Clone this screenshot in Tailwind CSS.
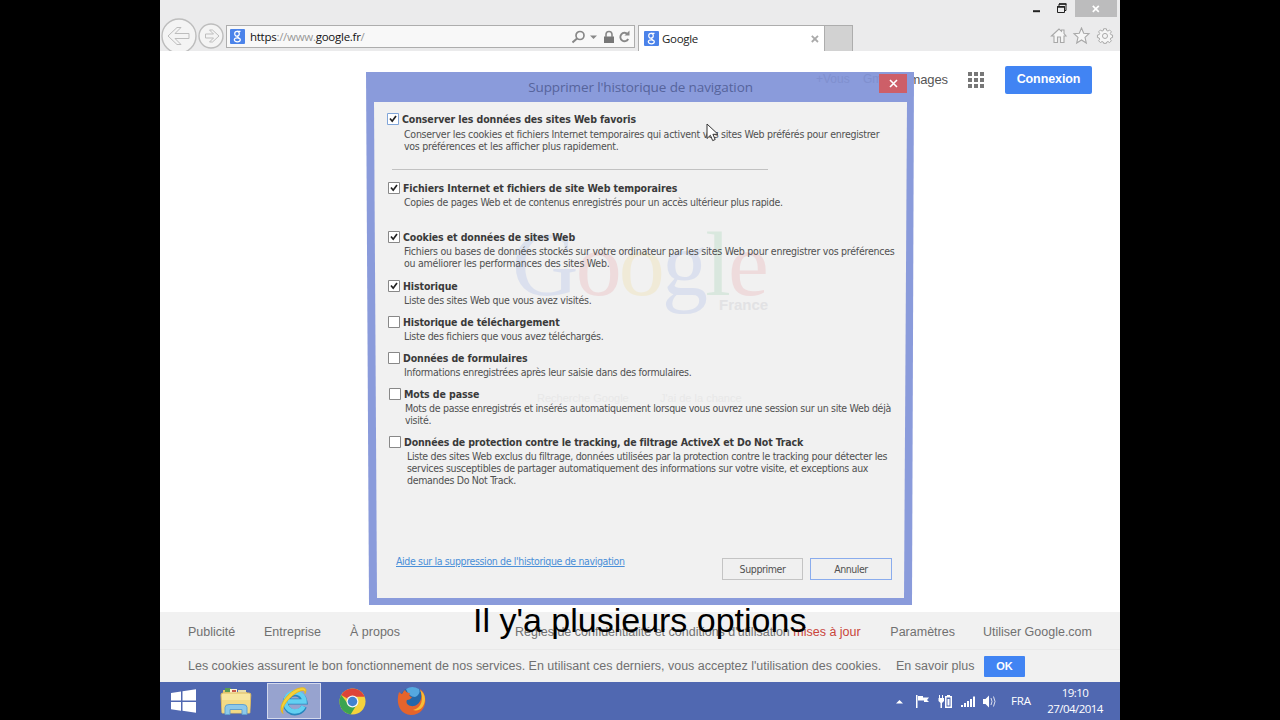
<!DOCTYPE html>
<html lang="fr">
<head>
    <meta charset="UTF-8">
    <meta name="viewport" content="width=device-width, initial-scale=1.0">
    <script src="https://cdn.jsdelivr.net/npm/@tailwindcss/browser@4"></script>
    <title>Supprimer l'historique de navigation</title>
</head>
<body class="bg-black overflow-hidden">
<div class="relative mx-auto flex h-[720px] w-[960px] flex-col overflow-hidden bg-white font-['Liberation_Sans',sans-serif]">

    <!-- browser chrome -->
    <header class="flex h-[51px] shrink-0 flex-col bg-[#ebebec]">
        <div class="flex h-[25px] items-start justify-end pr-[3px]">
            <svg class="mt-[2px] mr-[4px]" width="40" height="14" viewBox="0 0 40 14" fill="none" stroke="#222">
                <path d="M2 9.200h7" stroke-width="2"/>
                <path d="M26.500 4.500h7v6h-7zM28 4v-2h7v6.500h-2" stroke-width="1"/>
                <path d="M26 5h8M28 2h7.500" stroke-width="1.500"/>
            </svg>
            <div class="flex h-[17px] w-[42px] items-center justify-center bg-[#bcbcbd]">
                <svg width="8" height="8" viewBox="0 0 8 8" stroke="#fff" stroke-width="1.700"><path d="M.8.8l6 6M6.800.8l-6 6"/></svg>
            </div>
        </div>
        <div class="flex h-[26px] items-start">
            <svg class="-mt-[7px] h-[33px] w-[66px] shrink-0" viewBox="0 0 66 33" fill="#f4f4f4" stroke="#bdbdbd">
                <circle cx="19" cy="18" r="17" stroke-width="1.400"/>
                <path d="M8 18l9-8.500h4l-6 6h14v5H15l6 6h-4z"/>
                <circle cx="51" cy="18" r="12" stroke-width="1.400"/>
                <path d="M59 18l-6.500-6h-3l4 4h-8v4h8l-4 4h3z"/>
            </svg>
            <div class="flex h-[23px] w-[409px] shrink-0 items-center border border-[#adadad] bg-[#f8f8f8] pl-[3px] text-[11.500px] font-['Open_Sans',sans-serif]">
                <svg width="15" height="15" viewBox="0 0 15 15"><rect width="15" height="15" rx="1" fill="#4b83ea"/><g fill="none" stroke="#fff" stroke-width="1.200"><ellipse cx="7" cy="4.800" rx="2.300" ry="2.400"/><path d="M7 2.300h3.500M8 7.200c-1 1 .3 1.400 1.200 2.400"/><ellipse cx="7.300" cy="10.800" rx="3" ry="2"/></g></svg>
                <span class="mt-px ml-[5px] text-[#999] tracking-[-0.27px]"><span class="text-[#111]">https</span>://www.<span class="text-[#111]">google.fr</span>/</span>
                <svg class="mr-[2px] ml-auto" width="60" height="16" viewBox="0 0 60 16" fill="none" stroke="#888">
                    <circle cx="8" cy="6.500" r="4" stroke-width="1.700"/>
                    <path d="M5 9.500L.5 13.500" stroke-width="2"/>
                    <path d="M18 6.500h7l-3.500 3.500z" fill="#888" stroke="none"/>
                    <path d="M32 7.500h10v6.500H32z" fill="#777" stroke="none"/>
                    <path d="M34 8V5.500a3 3 0 0 1 6 0V8" stroke-width="1.600"/>
                    <path d="M55.500 5A4.200 4.200 0 1 0 56.200 10" stroke-width="1.900"/>
                    <path d="M52.500 6.500h5v-5z" fill="#888" stroke="none"/>
                </svg>
            </div>
            <div class="ml-[3px] flex h-[26px] w-[187px] shrink-0 items-center border border-b-0 border-[#adadad] bg-white pl-[5px] text-[11.500px] font-['Open_Sans',sans-serif] text-[#222]">
                <svg width="15" height="15" viewBox="0 0 15 15"><rect width="15" height="15" rx="1" fill="#4b83ea"/><g fill="none" stroke="#fff" stroke-width="1.200"><ellipse cx="7" cy="4.800" rx="2.300" ry="2.400"/><path d="M7 2.300h3.500M8 7.200c-1 1 .3 1.400 1.200 2.400"/><ellipse cx="7.300" cy="10.800" rx="3" ry="2"/></g></svg>
                <span class="mt-px ml-[3px] tracking-[-0.3px]">Google</span>
                <svg class="mr-[5px] ml-auto" width="8" height="8" viewBox="0 0 8 8" stroke="#aaa" stroke-width="1.800"><path d="M.8.8l6.200 6.200M7 .8L.8 7"/></svg>
            </div>
            <div class="h-[26px] w-[28px] shrink-0 border border-b-0 border-l-0 border-[#adadad] bg-[#d2d2d2]"></div>
            <svg class="mt-[2px] mr-[6px] ml-auto" width="64" height="18" viewBox="0 0 64 18" fill="#f6f6f6" stroke="#a8a8a8" stroke-width="1.100">
                <path d="M1.500 9L9 2l2.500 2.300V3H14v3.600L16 9h-2v6.500h-3.500V10h-3v5.500H4V9z"/>
                <path d="M31.500 1l2.200 5.300 5.300.4-4 3.700 1.300 5.600-4.800-3-4.800 3 1.300-5.600-4-3.700 5.300-.4z"/>
                <g transform="translate(5.500 .4) scale(.9)">
                    <path d="M53.500 1.500h3l.4 2 1.400.6 1.800-1.200 2 2-1.200 1.800.6 1.400 1.900.4v2.800l-1.900.4-.6 1.400 1.200 1.800-2 2-1.800-1.200-1.400.6-.4 1.400h-3l-.4-1.400-1.400-.6-1.800 1.200-2-2 1.200-1.800-.6-1.400-1.900-.4V8.500l1.900-.4.6-1.400-1.200-1.800 2-2 1.800 1.200 1.400-.6z"/>
                    <circle cx="55" cy="9.500" r="2.800"/>
                </g>
            </svg>
        </div>
    </header>

    <!-- google home page -->
    <main class="flex grow items-start justify-end pt-[15px] pr-[28px]">
        <span class="mt-[6px] text-[13px] leading-4 text-[#555] tracking-[-0.1px]">Images</span>
        <svg class="mt-[6px] mr-[21px] ml-[20px]" width="16" height="16" fill="#777"><path d="M0 0h4v4H0zM6 0h4v4H6zM12 0h4v4h-4zM0 6h4v4H0zM6 6h4v4H6zM12 6h4v4h-4zM0 12h4v4H0zM6 12h4v4H6zM12 12h4v4h-4z"/></svg>
        <div class="flex h-[28px] w-[87px] items-center justify-center rounded-[2px] bg-[#4184f3] pb-px text-[12.500px] font-bold text-white tracking-[-0.1px]">Connexion</div>
    </main>
    <footer class="shrink-0 bg-[#f1f1f1] text-[12.500px] text-[#707070]">
        <div class="flex h-[38px] items-center border-b border-[#e9e9e9] pt-[3px] pr-[28px] pl-[28px] whitespace-nowrap">
            <span class="w-[76px]">Publicité</span>
            <span class="w-[86px]">Entreprise</span>
            <span class="w-[165px]">À propos</span>
            <span>Règles de confidentialité et conditions d'utilisation <span class="text-[#c9453a]">mises à jour</span></span>
            <span class="ml-auto">Paramètres</span>
            <span class="ml-[28px]">Utiliser Google.com</span>
        </div>
        <div class="flex h-[32px] items-center pl-[28px] whitespace-nowrap">
            <span class="w-[708px] tracking-[-0.01px]">Les cookies assurent le bon fonctionnement de nos services. En utilisant ces derniers, vous acceptez l'utilisation des cookies.</span>
            <span class="w-[88px]">En savoir plus</span>
            <span class="flex h-[21px] w-[41px] items-center justify-center rounded-[1px] bg-[#4184f3] text-[11px] font-bold text-white">OK</span>
        </div>
    </footer>

    <!-- taskbar -->
    <nav class="flex h-[38px] shrink-0 items-center bg-[#5068b1] text-white font-['Open_Sans',sans-serif]">
        <svg class="ml-[11px]" width="25" height="24" fill="#fff"><path d="M0 4l10-1.500v9H0zM11.500 2.300L25 .3v11.200H11.500zM0 13h10v8.700L0 20.300zM11.500 13H25v10.700l-13.500-1.900z"/></svg>
        <svg class="ml-[24px]" width="32" height="30" viewBox="0 0 32 30">
            <path d="M3 4h11l2 2h11v10H3z" fill="#e5c871"/>
            <path d="M5 2h6v4H5z" fill="#5b9b52"/><path d="M10 3h7v4h-7z" fill="#fff4d0"/><path d="M12 4h4v2h-4z" fill="#c85a4a"/><path d="M18 4h8v4h-8z" fill="#e9dfae"/>
            <path d="M1 9q0-2 2-2h26q2 0 1.800 2l-1 18H2z" fill="#f7e6a0" stroke="#ddbb62"/>
            <path d="M2 14h28l-.5 12.500H2.500z" fill="#f3da85"/>
            <path d="M5 28.500v-7q0-3 4-3h14q4 0 4 3v7h-5v-5H10v5z" fill="#8cc8ea" stroke="#61a1cf"/>
        </svg>
        <div class="ml-[15px] flex h-[36px] w-[54px] items-center justify-center border border-[#d3d9ed] bg-[#97a3cf]">
            <svg width="32" height="30" viewBox="0 0 32 30" fill="none">
                <path d="M26 20.500A9.500 9.500 0 1 1 26.500 15.500H10" stroke="#2885bd" stroke-width="5.800"/>
                <path d="M25.500 20.200A9.500 9.500 0 1 1 26.500 15.500H10" stroke="#62d0f2" stroke-width="4.500"/>
                <path d="M5 27.500C-1 22 8 7 20 2.500c7-2 9.500 0 7 5 .5-3-2-4-6-2C13 9 2 21 5 27.500z" fill="#f5d13b" stroke="#e9b91b"/>
            </svg>
        </div>
        <svg class="ml-[18px]" width="27" height="27" viewBox="0 0 28 28">
            <circle cx="14" cy="14" r="13.500" fill="#f4d23c"/>
            <path d="M14 14L2.300 7.200A13.500 13.500 0 0 1 25.700 7.200L26.500 9H14z" fill="#dd4438"/>
            <path d="M2.300 7.200A13.500 13.500 0 0 0 12 27.400L18.500 17 9 16z" fill="#3ca450"/>
            <circle cx="14" cy="14" r="6.200" fill="#f5f5f5"/><circle cx="14" cy="14" r="4.900" fill="#4282cf"/>
        </svg>
        <svg class="ml-[31px]" width="29" height="30" viewBox="0 0 29 30">
            <circle cx="15" cy="14" r="12.500" fill="#2367a9"/>
            <path d="M9 3q6-4 13 0 2 5-4 8-6 0-9-8z" fill="#55a8df"/>
            <path d="M2 6c-3 9-1 22 12 23 12 0 17-12 13-21-1-3-3-4-4-5 3 7 1 15-6 17-5 1-9-3-7-6 2 0 4-1 5-3-3 0-3-2-2-4-3 0-4-1-5-3-2 1-2 3-3 4-2-1-2-1-3-2z" fill="#e5642c"/>
            <path d="M23 4c4 8 2 18-7 20 7 2 12-4 12-11 0-4-2-7-5-9z" fill="#f6bd36"/>
        </svg>
        <svg class="ml-auto" width="110" height="20" viewBox="0 0 110 20" fill="#fff">
            <path d="M1 12.500h7L4.500 9z"/>
            <path d="M21 4h1.500v13H21zM23 5h5v1.500h6L32 9l2 2h-5V9.500h-6z"/>
            <path d="M44 4h1v3h2V4h1v3h1v3l-2 2v5h-1.500v-5l-2-2V7h.5z"/>
            <path d="M50 5h2V4h3v1h2v12h-7zM51.500 6.500v9h4v-9z" fill-rule="evenodd"/><path d="M52.500 8h2v6.500h-2z"/>
            <path d="M66 14h2v2h-2zM69 12h2v4h-2zM72 10h2v6h-2zM75 8h2v8h-2zM78 5.500h2V16h-2z"/>
            <path d="M88 8h2.500L94 4.500v12L90.500 13H88z"/>
            <path d="M96 7q2 3.500 0 7M98.500 5.500q3 5 0 10" fill="none" stroke="#fff" stroke-opacity=".8"/>
        </svg>
        <span class="ml-[6px] w-[34px] text-[11.500px] tracking-[-0.2px]">FRA</span>
        <div class="mr-[15px] w-[60px] text-center text-[11.500px] leading-[16px] tracking-[-0.55px]">
            <div>19:10</div>
            <div>27/04/2014</div>
        </div>
    </nav>

    <!-- dialog window, fading in with a slight perspective -->
    <section class="absolute top-[72px] left-[206px] flex h-[533px] w-[548px] flex-col bg-[#8a9bdb] pr-[7px] pb-[7px] pl-[8px] [clip-path:polygon(0_0,100%_0,calc(100%-2px)_100%,3px_100%)]">
        <div class="relative flex h-[30px] shrink-0 items-center justify-center text-[13.500px] text-[#56649c] font-['Open_Sans',sans-serif]">
            <span class="absolute top-0 left-[442px] text-[12px] leading-[14px] text-[#8090cf] font-['Liberation_Sans',sans-serif]">+Vous &nbsp;&nbsp; Gmail</span>
            <span class="tracking-[-0.12px]">Supprimer l'historique de navigation</span>
            <div class="absolute top-[2px] right-0 flex h-[19px] w-[28px] items-center justify-center bg-[#cd5f68]">
                <svg width="9" height="9" viewBox="0 0 9 9" stroke="#fff" stroke-width="1.600"><path d="M1 1l7 7M8 1L1 8"/></svg>
            </div>
        </div>
        <div class="relative flex h-[496px] flex-col bg-[#f1f1f1] pt-[10px] pl-[14px] text-[10.500px] leading-[12px] whitespace-nowrap text-[#505050] font-['DejaVu_Sans_Condensed','DejaVu_Sans',sans-serif] [clip-path:polygon(0_0,100%_0,calc(100%-3px)_100%,3px_100%)]">
            <!-- page showing through the window -->
            <div class="absolute top-[107px] left-[138px] text-[92px] leading-[110px] tracking-[-2.800px] opacity-10 font-['Liberation_Serif',serif]"><span class="text-[#2456d8]">G</span><span class="text-[#d8242f]">o</span><span class="text-[#eeb800]">o</span><span class="text-[#2456d8]">g</span><span class="text-[#129a3f]">l</span><span class="text-[#d8242f]">e</span></div>
            <div class="absolute top-[194px] left-[345px] text-[15px] leading-[18px] font-bold text-[#e2e2e4] font-['Liberation_Sans',sans-serif]">France</div>
            <div class="absolute top-[290px] left-[163px] text-[11px] text-[#e8e8e8] font-['Liberation_Sans',sans-serif]">Recherche Google</div>
            <div class="absolute top-[290px] left-[286px] text-[11px] text-[#e8e8e8] font-['Liberation_Sans',sans-serif]">J'ai de la chance</div>

            <div class="relative -ml-px flex h-[57px] gap-[3px]">
                <svg class="mt-px shrink-0" width="12" height="12"><path d="M.5.500h11v11H.5z" fill="#fff" stroke="#80a5d8"/><path d="M3 5.500l2.200 2.700L9 3" fill="none" stroke="#222" stroke-width="1.700"/></svg>
                <div>
                    <h3 class="mb-[2px] h-[14px] text-[10.500px] leading-[14px] font-bold text-[#3a3a3a] tracking-[-0.1px]">Conserver les données des sites Web favoris</h3>
                    <p class="pl-[2px] tracking-[-0.25px]">Conserver les cookies et fichiers Internet temporaires qui activent vos sites Web préférés pour enregistrer<br>vos préférences et les afficher plus rapidement.</p>
                </div>
            </div>
            <div class="relative ml-[4px] h-[12px] w-[376px] border-t border-[#c2c2c2]"></div>
            <div class="relative flex h-[49px] gap-[3px]">
                <svg class="mt-px shrink-0" width="12" height="12"><path d="M.5.500h11v11H.5z" fill="#fff" stroke="#888"/><path d="M3 5.500l2.200 2.700L9 3" fill="none" stroke="#222" stroke-width="1.700"/></svg>
                <div>
                    <h3 class="mb-px h-[14px] text-[10.500px] leading-[14px] font-bold text-[#3a3a3a] tracking-[-0.11px]">Fichiers Internet et fichiers de site Web temporaires</h3>
                    <p class="pl-[1px] tracking-[-0.29px]">Copies de pages Web et de contenus enregistrés pour un accès ultérieur plus rapide.</p>
                </div>
            </div>
            <div class="relative flex h-[49px] gap-[3px]">
                <svg class="mt-px shrink-0" width="12" height="12"><path d="M.5.500h11v11H.5z" fill="#fff" stroke="#888"/><path d="M3 5.500l2.200 2.700L9 3" fill="none" stroke="#222" stroke-width="1.700"/></svg>
                <div>
                    <h3 class="mb-px h-[14px] text-[10.500px] leading-[14px] font-bold text-[#3a3a3a] tracking-[-0.12px]">Cookies et données de sites Web</h3>
                    <p class="pl-[1px] tracking-[-0.24px]">Fichiers ou bases de données stockés sur votre ordinateur par les sites Web pour enregistrer vos préférences<br>ou améliorer les performances des sites Web.</p>
                </div>
            </div>
            <div class="relative flex h-[36px] gap-[3px]">
                <svg class="mt-px shrink-0" width="12" height="12"><path d="M.5.500h11v11H.5z" fill="#fff" stroke="#888"/><path d="M3 5.500l2.200 2.700L9 3" fill="none" stroke="#222" stroke-width="1.700"/></svg>
                <div>
                    <h3 class="mb-px h-[14px] text-[10.500px] leading-[14px] font-bold text-[#3a3a3a] tracking-[-0.1px]">Historique</h3>
                    <p class="pl-[1px] tracking-[-0.25px]">Liste des sites Web que vous avez visités.</p>
                </div>
            </div>
            <div class="relative flex h-[36px] gap-[3px]">
                <svg class="mt-px shrink-0" width="12" height="12"><path d="M.5.500h11v11H.5z" fill="#fff" stroke="#888"/></svg>
                <div>
                    <h3 class="mb-px h-[14px] text-[10.500px] leading-[14px] font-bold text-[#3a3a3a] tracking-[-0.12px]">Historique de téléchargement</h3>
                    <p class="pl-[1px] tracking-[-0.28px]">Liste des fichiers que vous avez téléchargés.</p>
                </div>
            </div>
            <div class="relative flex h-[36px] gap-[3px]">
                <svg class="mt-px shrink-0" width="12" height="12"><path d="M.5.500h11v11H.5z" fill="#fff" stroke="#888"/></svg>
                <div>
                    <h3 class="mb-px h-[14px] text-[10.500px] leading-[14px] font-bold text-[#3a3a3a] tracking-[-0.13px]">Données de formulaires</h3>
                    <p class="pl-[1px] tracking-[-0.29px]">Informations enregistrées après leur saisie dans des formulaires.</p>
                </div>
            </div>
            <div class="relative ml-px flex h-[48px] gap-[3px]">
                <svg class="mt-px shrink-0" width="12" height="12"><path d="M.5.500h11v11H.5z" fill="#fff" stroke="#888"/></svg>
                <div>
                    <h3 class="mb-px h-[14px] text-[10.500px] leading-[14px] font-bold text-[#3a3a3a] tracking-[-0.1px]">Mots de passe</h3>
                    <p class="pl-[1px] tracking-[-0.3px]">Mots de passe enregistrés et insérés automatiquement lorsque vous ouvrez une session sur un site Web déjà<br>visité.</p>
                </div>
            </div>
            <div class="relative ml-px flex h-[119px] gap-[3px]">
                <svg class="mt-px shrink-0" width="12" height="12"><path d="M.5.500h11v11H.5z" fill="#fff" stroke="#888"/></svg>
                <div>
                    <h3 class="mb-px h-[14px] text-[10.500px] leading-[14px] font-bold text-[#3a3a3a] tracking-[-0.16px]">Données de protection contre le tracking, de filtrage ActiveX et Do Not Track</h3>
                    <p class="pl-[3px] tracking-[-0.31px]">Liste des sites Web exclus du filtrage, données utilisées par la protection contre le tracking pour détecter les<br>services susceptibles de partager automatiquement des informations sur votre visite, et exceptions aux<br>demandes Do Not Track.</p>
                </div>
            </div>
            <div class="relative flex items-start pr-[15px] pl-[8px]">
                <span class="mt-px text-[#4a8fd8] underline tracking-[-0.36px]">Aide sur la suppression de l'historique de navigation</span>
                <span class="mt-[4px] ml-auto flex h-[22px] w-[81px] items-center justify-center border border-[#c4c4c4] bg-[#f0f0f0] tracking-[-0.4px]">Supprimer</span>
                <span class="mt-[4px] ml-[7px] flex h-[22px] w-[82px] items-center justify-center border border-[#8aaced] bg-[#f0f0f0] tracking-[-0.45px]">Annuler</span>
            </div>
        </div>
    </section>

    <!-- mouse pointer -->
    <svg class="absolute top-[123px] left-[546px]" width="14" height="20" viewBox="0 0 14 20"><path d="M1 1v14.500l3.400-3.200 2.300 5.300 2.500-1.100-2.300-5.200H12z" fill="#fff" stroke="#333"/></svg>

    <!-- video caption -->
    <div class="absolute top-[600px] left-[313px] text-[34px] leading-[40px] whitespace-nowrap text-black">Il y'a plusieurs options</div>
</div>
</body>
</html>
